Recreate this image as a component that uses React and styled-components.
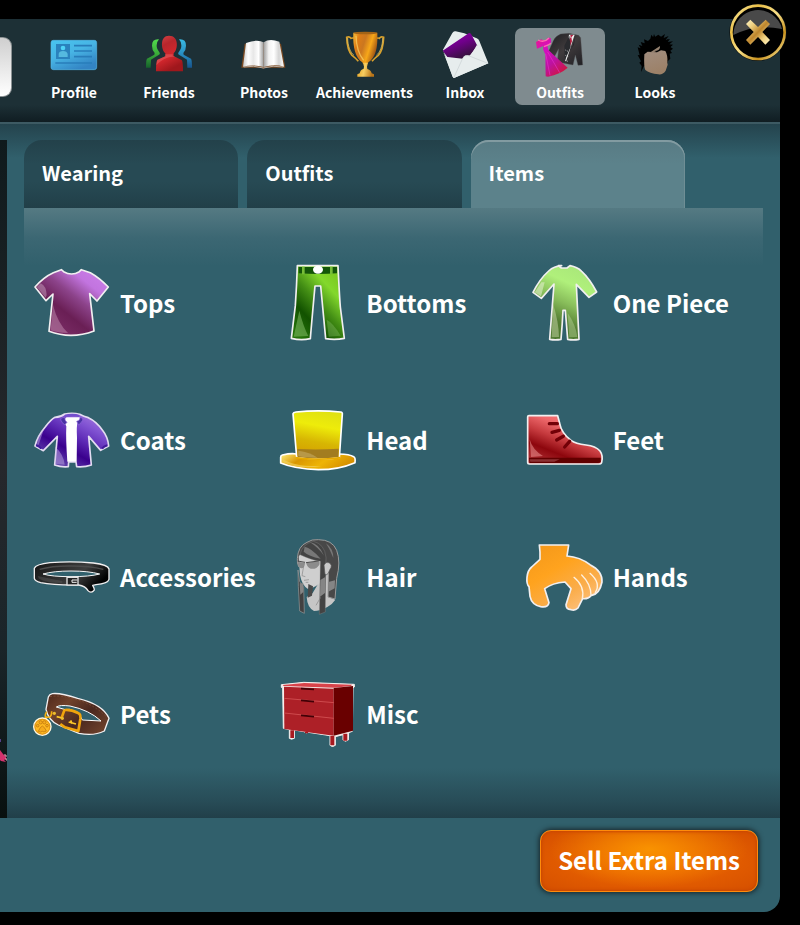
import React, { useState } from "react";
import styled, { createGlobalStyle, css } from "styled-components";

const GlobalStyle = createGlobalStyle`
  * { box-sizing: border-box; }
  body {
    margin: 0;
    background: #000;
    color: #fff;
    font-family: "Noto Sans CJK SC", "Noto Sans", sans-serif;
    font-weight: 700;
  }
  button {
    margin: 0;
    padding: 0;
    border: 0;
    background: none;
    color: inherit;
    font: inherit;
    cursor: pointer;
  }
`;

const Page = styled.div`
  min-height: 100vh;
  padding: 19px 20px 13px 0;
  display: flex;
  background: #000;
`;

const Shell = styled.main`
  position: relative;
  flex: 1;
  min-width: 0;
  display: flex;
  flex-direction: column;
  background: #31606c;
  border-radius: 0 0 16px 0;
`;

const Header = styled.header`
  height: 105px;
  display: flex;
  align-items: flex-start;
  gap: 17px;
  padding-top: 9px;
  background: linear-gradient(#1d3036 0, #1d3036 86px, #101d22 103px);
  border-bottom: 2px solid #3d5a63;
`;

const EdgeButton = styled.button`
  width: 12px;
  height: 60px;
  margin-top: 9px;
  border: 1px solid #8c9294;
  border-left: 0;
  border-radius: 0 9px 9px 0;
  background: linear-gradient(#cfcfcf, #fff);
`;

const Nav = styled.nav`
  display: flex;
  gap: 5px;
`;

const NavButton = styled.button`
  min-width: 90px;
  height: 77px;
  padding: 3px 2px 0;
  display: flex;
  flex-direction: column;
  align-items: center;
  gap: 3px;
  border-radius: 7px;
  font-size: 14px;
  line-height: 20px;
  background: ${(p) => (p.$active ? "#7f8b8f" : "transparent")};
`;

const NavIcon = styled.svg`
  width: 48px;
  height: 48px;
  flex: none;
`;

const CloseButton = styled.button`
  position: absolute;
  top: -16px;
  right: -8px;
  width: 60px;
  height: 60px;
`;

const CloseIcon = styled.svg`
  display: block;
  width: 60px;
  height: 60px;
`;

const Body = styled.div`
  flex: 1;
  display: flex;
  gap: 17px;
  padding: 16px 17px 0 0;
  background:
    linear-gradient(#24434d, rgba(49, 96, 108, 0)) top / 100% 34px no-repeat,
    linear-gradient(rgba(49, 96, 108, 0), #284d58 32px, #213f49) bottom / 100% 50px no-repeat;
`;

const Preview = styled.aside`
  width: 7px;
  display: flex;
  flex-direction: column;
  justify-content: flex-end;
  background: linear-gradient(#0f1a1c, #26282c 48%, #1a2529 75%, #08100f);
`;

const PreviewDetail = styled.svg`
  width: 7px;
  height: 80px;
`;

const Wardrobe = styled.section`
  flex: 1;
  min-width: 0;
`;

const Tabs = styled.div`
  display: grid;
  grid-template-columns: repeat(3, 29%);
  gap: 9px;
`;

const activeTab = css`
  background: linear-gradient(#587b84, #5c828b 24px);
  box-shadow: inset 0 2px 0 #829ba1, inset -1px 0 0 #6f8e95;
`;

const Tab = styled.button`
  height: 68px;
  padding: 0 18px 2px;
  text-align: left;
  font-size: 20px;
  line-height: 32px;
  border-radius: 18px 18px 0 0;
  background: linear-gradient(#23414a, #274a54 24px, #274a54 42px, #213f48);
  ${(p) => p.$active && activeTab}
`;

const Panel = styled.div`
  padding: 57px 0 66px;
  background: linear-gradient(#557a83, rgba(70, 110, 122, 0.5) 30px, rgba(49, 96, 108, 0) 58px);
`;

const Categories = styled.div`
  display: grid;
  grid-template-columns: repeat(3, minmax(0, 1fr));
  row-gap: 61px;
`;

const Category = styled.button`
  height: 76px;
  padding-left: 10px;
  display: flex;
  align-items: center;
  gap: 10px;
  font-size: 24px;
  line-height: 36px;
  text-align: left;
  white-space: nowrap;
`;

const CategoryIcon = styled.svg`
  width: 76px;
  height: 76px;
  flex: none;
  overflow: visible;
`;

const Footer = styled.footer`
  height: 94px;
  padding: 12px 22px 0 0;
  display: flex;
  justify-content: flex-end;
  align-items: flex-start;
`;

const SellButton = styled.button`
  height: 62px;
  padding: 0 17px 2px;
  border: 1px solid #ff8b0b;
  border-radius: 11px;
  font-size: 24px;
  line-height: 36px;
  background:
    radial-gradient(ellipse at 50% 30%, rgba(255, 166, 0, 0.7), rgba(255, 140, 0, 0) 65%),
    radial-gradient(ellipse at center, #f36b00, #d44f00);
  box-shadow: 0 0 5px 1px #17252a, inset 0 0 3px 1px #c94800;
`;

const Gradient = ({ id, stops, x1 = 0, y1 = 0, x2 = 0, y2 = 1 }) => (
  <linearGradient id={id} x1={x1} y1={y1} x2={x2} y2={y2}>
    {stops.map((c, i) => (
      <stop key={i} offset={i / (stops.length - 1)} stopColor={c} />
    ))}
  </linearGradient>
);

const navItems = [
  {
    name: "Profile",
    box: "150 93 144 144",
    art: (
      <>
        <Gradient id="card" x2={0.6} stops={["#48c5f0", "#47b4e4", "#3384c4"]} />
        <rect x="153" y="121" width="137" height="88" rx="7" fill="url(#card)" stroke="#55b8e8" strokeWidth="2" />
        <rect x="168" y="132" width="42" height="45" fill="#2a82bd" />
        <circle cx="189" cy="144" r="7" fill="#4fd4f7" />
        <path d="M176 171v-9q1-9 13-9t14 9v9z" fill="#55b9df" />
        <path d="M222 137h54M222 153h54M222 170h54M166 189h110" stroke="#287dba" strokeWidth="5" />
      </>
    ),
  },
  {
    name: "Friends",
    box: "432 93 144 144",
    art: (
      <>
        <Gradient id="green" stops={["#53da4d", "#3bac39", "#15612c"]} />
        <Gradient id="blue" stops={["#3abbe4", "#288fc2", "#17548d"]} />
        <Gradient id="red" x2={0.4} stops={["#d9484a", "#b9262c", "#d3272d", "#9f171c"]} />
        <path d="M474 118q-21-2-21 19 0 14 8 22l-1 5-22 12q-3 3-3 27h14l1-24 24-15q4-2 2-6-10-12-9-22 1-12 7-18z" fill="url(#green)" />
        <path d="M534 118q21-2 21 19 0 14-8 22l1 5 22 12q3 3 3 27h-14l-1-24-24-15q-4-2-2-6 10-12 9-22-1-12-7-18z" fill="url(#blue)" />
        <path d="M504 107c-28 0-24 42-11 53v9l-24 11q-4 3-4 34h81q0-31-4-34l-24-11v-9c13-11 17-53-14-53z" fill="url(#red)" />
        <path d="M466 196q10-14 33-23 22-6 36 3l-20-9v-4h-22v6l-24 10z" fill="#e35b5f" opacity=".6" />
      </>
    ),
  },
  {
    name: "Photos",
    box: "717 93 144 144",
    art: (
      <>
        <Gradient id="pageL" x2={1} y2={0} stops={["#c8c8c8", "#fff", "#e7e7e7", "#fff", "#9b9b9b"]} />
        <Gradient id="pageR" x2={1} y2={0} stops={["#9f9f9f", "#f3f3f3", "#fff", "#d4d4d4", "#fff"]} />
        <path d="M731 131l-10 72h60l6 3 7-3h59l-13-72z" fill="#7b4a22" />
        <path d="M735 129q35-13 53-2v74q-32-9-62-1z" fill="url(#pageL)" />
        <path d="M788 127q17-13 47-2l14 75q-29-9-61 1z" fill="url(#pageR)" />
        <path d="M728 201q30-6 59 3 29-9 60-3" fill="none" stroke="#ddd" strokeWidth="2" />
      </>
    ),
  },
  {
    name: "Achievements",
    box: "209 93 144 144",
    art: (
      <>
        <Gradient id="cup" x2={1} y2={0.4} stops={["#f8bd36", "#dd7c16", "#cb7720", "#f7a719", "#a45814"]} />
        <Gradient id="base" x2={1} y2={0.2} stops={["#e69c16", "#f7cd61", "#b97418"]} />
        <path d="M247 115q-5-2-8 0-5-7-13-3c1 24 4 42 16 54q10 7 19 18M316 115q5-2 8 0 5-7 13-3c-1 24-4 42-16 54q-10 7-19 18" fill="none" stroke="#d9a22d" strokeWidth="5" />
        <path d="M229 114c0 24 9 45 19 52M334 114c0 24-9 45-19 52" fill="none" stroke="#f3d36c" strokeWidth="2" />
        <path d="M246 98h72c2 48-6 75-27 89l-2 4h-14l-2-4c-20-14-29-44-27-89z" fill="url(#cup)" />
        <ellipse cx="282" cy="99" rx="36" ry="4" fill="#a36316" />
        <path d="M254 107c1 40 10 58 23 74" stroke="#ffda6b" strokeWidth="4" fill="none" opacity=".65" />
        <path d="M275 188h15l-3 12 1 7q12 4 13 13l7 3v7h-50v-7l7-3q1-10 12-14l1-6z" fill="url(#base)" />
      </>
    ),
  },
  {
    name: "Inbox",
    box: "513 93 144 144",
    art: (
      <>
        <Gradient id="letter" x2={0.5} stops={["#9500ac", "#70008b", "#35113b"]} />
        <path d="M519 149l28-50q4-7 10-5l26 6 37 15q6 2 8 8l27 67-103 44q-3-1-4-4z" fill="#e7eded" />
        <path d="M518 152l79-53q5-1 8 6l17 32-31 40-55-1z" fill="url(#letter)" />
        <path d="M520 157l7 13 50 6q5-12 17-10 6 2 9-1l18-31 34 56-103 44q-3-1-4-4z" fill="#e7eded" />
        <path d="M552 232l26-57q6-11 17-8l59 23" fill="none" stroke="#c8d0d1" strokeWidth="2" />
      </>
    ),
  },
  {
    name: "Outfits",
    box: "108 93 144 144",
    art: (
      <>
        <Gradient id="dress" x2={0.7} stops={["#e8188a", "#d40fc0", "#bd12a2", "#ce1641"]} />
        <Gradient id="jacket" x2={1} stops={["#191b1e", "#403b3d", "#202024"]} />
        <path d="M182 102l25-2 29 6 6 7 6 82-14 1-8-31-7 30-35-7-12-5 4-37-18 34-19-11 21-47q6-13 22-20z" fill="url(#jacket)" stroke="#555559" strokeWidth="1" />
        <path d="M207 104h17l-4 12-22 69-2-6z" fill="#ededed" />
        <path d="M211 105h9l-6 7 2 12-8 21-1-25 5-8z" fill="#b21d40" />
        <path d="M208 107l-15 30 2 44 17-41zm18 1l-8 29-9 16 13-18z" fill="#292a2e" />
        <path d="M196 150l10 5M196 166l11 4M195 181l9 3" stroke="#eee" strokeWidth="2" strokeDasharray="3 3" />
        <path d="M108 126l16-8q10 7 20 1l-1-6 9 1 2 12-12 11 3 12 12 12 46 42q-22 20-59 27l-7-1-1-65-7-17 1-9-19 8z" fill="url(#dress)" />
        <path d="M114 120q18 10 33-6M132 140q15-6 21-10" fill="none" stroke="#ff69b2" strokeWidth="4" />
        <path d="M137 161l13 65M143 156l36 62" stroke="#ea33cd" strokeWidth="3" opacity=".6" />
      </>
    ),
  },
  {
    name: "Looks",
    box: "390 93 144 144",
    art: (
      <>
        <Gradient id="face" x2={0.3} stops={["#a18d7f", "#9c8168"]} />
        <path d="M420 216l2-18-7-10 5-4-10-19 6 1-6-24 9 3-6-11 11 4-5-12 12 4-2-12 12 5 7-7 3-12 7 9 14-9 8 6 12-8-4 12 15-6-9 12 13-3-7 9 16-2-11 9 11 1-8 7 8 5-8 6 5 7-7 2 2 15-8 8-1 6-70 8z" fill="#000" />
        <path d="M455 116l4-14 5 12zM470 120l8-11-2 14zM487 126l16-10-7 14zM498 138l16-4-9 10z" fill="#000" />
        <path d="M430 163l10-8 28 2 12-6 13 2q8 13 6 36l1 5-6 18q-9 13-22 11-27-3-39-13-5-7-3-47z" fill="url(#face)" />
        <path d="M446 158q24 1 33-22-9 19-20 17 20 0 18-15z" fill="#94816f" />
      </>
    ),
  },
];

const outline = { stroke: "#f1eff0", strokeWidth: 5, strokeLinejoin: "round" };

const categories = [
  {
    name: "Tops",
    box: "102 105 228 228",
    art: (
      <>
        <Gradient id="tee" x1={1} y1={0.1} x2={0.3} y2={0.9} stops={["#cb7fe8", "#c274df", "#8c438a", "#6a1f55", "#782b63"]} />
        <path d="M105 171q26-30 55-43l24-9 7 6q24 14 47 0l6-6 27 9q27 15 54 43l-34 42-22-22 13 112q-68 26-135 1l12-112-21 20z" fill="url(#tee)" {...outline} />
        <path d="M110 171l12-11q17 8 18 35l-3 8z" fill="#d3afcc" opacity=".45" />
        <path d="M159 225q14 55 45 84-35-1-52-8z" fill="#d7a8c6" opacity=".4" />
      </>
    ),
  },
  {
    name: "Bottoms",
    box: "90 75 228 228",
    art: (
      <>
        <Gradient id="pants" x1={0.8} x2={0.1} y2={0.9} stops={["#79c51e", "#83d82c", "#448f15", "#125200", "#247109"]} />
        <path d="M142 77h122q4 86 7 124l12 94q-28 6-56 1l-15-158h-17q-10 108-14 158-28 6-57-1l12-98q4-60 6-120z" fill="url(#pants)" {...outline} />
        <path d="M146 81h115v19q-56 4-115 0z" fill="#145609" />
        <path d="M160 80v23M244 80v23" stroke="#77bd38" strokeWidth="8" />
        <ellipse cx="204" cy="89" rx="15" ry="12" fill="#fff" />
        <path d="M148 212q12 47 27 76l-44 2z" fill="#a8dc89" opacity=".4" />
        <path d="M230 239q20 10 42 48l-36 3z" fill="#85bd64" opacity=".4" />
      </>
    ),
  },
  {
    name: "One Piece",
    box: "78 75 228 228",
    art: (
      <>
        <Gradient id="suit" x1={0.7} x2={0.3} y2={1} stops={["#a9e77a", "#b0f07b", "#88bd5a", "#547d33", "#48762b"]} />
        <path d="M172 77l9 7h17l9-7q22 4 35 17 24 22 45 62l-23 16-38-39 8 165q-17 3-34 0-4-49-7-87h-7q-2 43-6 87-17 3-34 0l13-166-38 43-25-18q20-40 47-64 16-14 39-16z" fill="url(#suit)" {...outline} />
        <path d="M101 157l20-30 10 0-11 42z" fill="#dfeec9" opacity=".6" />
        <path d="M156 191q17 53 18 100l-22 1z" fill="#d8e3b8" opacity=".45" />
        <path d="M200 219q24 34 29 72l-24 1z" fill="#c9e0a7" opacity=".4" />
      </>
    ),
  },
  {
    name: "Coats",
    box: "102 516 228 228",
    art: (
      <>
        <Gradient id="coat" x1={0.8} x2={0.2} y2={0.8} stops={["#a57adf", "#8052d2", "#5d2ab5", "#3a008d", "#5c3aa8"]} />
        <path d="M165 562q18-1 29-10 24-5 45 1 13 7 26 10 24 11 42 37 17 21 19 48l-24 13-36-42 8 86q-20 7-44 5l-2-14h-22l-1 14q-21 2-41-5l8-86-42 43-25-14q7-29 30-56 18-24 30-30z" fill="url(#coat)" {...outline} stroke="#e3dcf1" />
        <path d="M200 562h39q3 6-6 13-4 12-2 48l-1 72h-28q-5-70-3-106-4-8-7-15 0-9 8-12z" fill="#fff" />
        <path d="M184 564q-6 6 10 21l7-8q-8-6-6-15zM246 564q8 5-10 21l-6-11q12-3 10-12z" fill="#4932a4" stroke="#8f6bd9" strokeWidth="2" />
        <path d="M116 644l17-50q-26 24-21 50zM166 650q26 25 28 54l-28-2z" fill="#cab8e8" opacity=".45" />
        <path d="M195 558q22-7 43 0" stroke="#7350cd" strokeWidth="7" fill="none" />
        <path d="M108 646q11 3 16 10M322 646q-11 3-16 10" stroke="#411b9a" strokeWidth="6" fill="none" />
      </>
    ),
  },
  {
    name: "Head",
    box: "90 486 228 228",
    art: (
      <>
        <Gradient id="hat" x1={0.7} x2={0.5} y2={1} stops={["#dfe012", "#eeec0a", "#d7b603", "#d59d00"]} />
        <Gradient id="brim" x2={1} y2={0.3} stops={["#fff080", "#d99600", "#eeb405", "#d79200"]} />
        <path d="M92 652q0-6 5-7 27-6 42-3h128q32 1 44 8 6 2 4 18-48 21-110 21-70-2-113-20z" fill="url(#brim)" {...outline} stroke="#fff" />
        <path d="M129 521q1-4 9-5 66-7 134 0 6 1 5 6l-9 131q-65 8-128-2z" fill="url(#hat)" {...outline} stroke="#fff" />
        <path d="M142 627q65 3 124-1l-1 25q-62 8-122 0z" fill="#a27c20" />
        <path d="M145 632q35 4 58 21-34 1-58-4z" fill="#c0a45a" opacity=".7" />
        <path d="M137 650q66 10 134 0v6q-66 8-134 0z" fill="#e5a900" />
        <path d="M98 656q34 25 118 22-72 12-118-12z" fill="#f3d25f" opacity=".65" />
      </>
    ),
  },
  {
    name: "Feet",
    box: "78 486 228 228",
    art: (
      <>
        <Gradient id="boot" x1={0.8} y1={0.1} x2={0.25} y2={1} stops={["#fa7478", "#ee686b", "#c5393d", "#8d060d", "#ac2c30"]} />
        <path d="M80 530q0-3 4-3h86l6 23q5 29 35 52 12 9 44 13 29 3 42 18 10 14 5 34-1 5-9 5H85q-5 0-5-5z" fill="url(#boot)" {...outline} />
        <path d="M84 653h215v11q-1 5-8 5H86z" fill="#620000" />
        <path d="M86 658h90l-16 7H88z" fill="#a65356" opacity=".6" />
        <path d="M145 551h24M153 577l22-6M167 600l20-11M191 621l15-17" stroke="#720007" strokeWidth="10" strokeLinecap="round" />
        <path d="M86 598q8 31 40 50l-36 3z" fill="#f49d9c" opacity=".5" />
      </>
    ),
  },
  {
    name: "Accessories",
    box: "102 57 228 228",
    art: (
      <>
        <Gradient id="belt" x2={1} y2={0.4} stops={["#151515", "#2a2a2a", "#3d3d3d", "#000"]} />
        <path d="M103 145q4-12 47-17 65-5 130 1 44 5 47 18v31q-3 12-39 16l-10 2q8 14 3 16-9 9-17 0-8-14-28-17-76 1-114-7-19-5-19-13z" fill="url(#belt)" {...outline} strokeWidth="4" />
        <path d="M129 162q32-9 84-9t86 9q-30 8-86 8-58 0-84-8z" fill="#31606c" stroke="#f4f4f4" strokeWidth="3" />
        <path d="M119 148q40-11 96-10 54 0 95 10" stroke="#4c4c4c" strokeWidth="4" fill="none" />
        <rect x="201" y="172" width="33" height="23" fill="#222" stroke="#e3e3e3" strokeWidth="4" />
        <path d="M232 180h-16v7h14" fill="none" stroke="#f0f0f0" strokeWidth="3" />
        <path d="M113 168q36 8 74 15v6q-45 0-70-13z" fill="#555" opacity=".5" />
      </>
    ),
  },
  {
    name: "Hair",
    box: "60 57 228 228",
    art: (
      <>
        <path d="M178 185l30-30-2 76 20 8q-8 13-24 22-22 12-40 12-20-10-22-42l18-12z" fill="#c6c6c6" />
        <path d="M112 116q2-38 29-49 14-10 34-8 42 0 55 32 13 34 0 84l-5 62-21-6 1-71-13-46-72-10-4 36q-5-10-4-24z" fill="#484848" stroke="#9a9a9a" strokeWidth="3" />
        <path d="M116 110q8-12 20-11l50 26-2 60q-14 16-40 22-18-10-24-42z" fill="#cfcfcf" />
        <path d="M114 150l5 35 12 17 2 78-14-7-4-74z" fill="#414141" stroke="#999" strokeWidth="2" />
        <path d="M145 192l14 7-3 28-13 6z" fill="#4a4a4a" />
        <path d="M113 125l22 4q-1 16-11 16-9-3-11-20zM139 129l37-6q5 4 2 11-9 15-26 12-11-4-13-17z" fill="#8c8c8c" />
        <path d="M113 123l22 4M138 128l38-5" stroke="#4d4d4d" strokeWidth="3" />
        <path d="M120 104q6-31 40-40 34 8 38 48l-2 164-18 7 3-159q-22-2-61-20z" fill="#434343" stroke="#8e8e8e" strokeWidth="1" />
        <path d="M134 80q20 4 48 36-36-7-51-21zM150 67q26 3 42 40-18-25-42-40zM198 70q22 16 22 44-10-25-22-44z" fill="#777" />
        <path d="M192 135q6-11 15-7 12 7 3 20l-6 13q-4 5-9 2z" fill="#c9c9c9" stroke="#555" strokeWidth="2" />
        <path d="M119 190h11v26l-9 8zM181 180l15-9v47l-16 12zM205 186l20-5-1 24-19 10z" fill="#858585" />
        <path d="M131 138l-5 29 10 3M132 181l15-2M137 187h8M182 232l-14 24" stroke="#858585" strokeWidth="2" fill="none" />
      </>
    ),
  },
  {
    name: "Hands",
    box: "78 57 228 228",
    art: (
      <>
        <Gradient id="hand" x1={0.2} x2={0.9} stops={["#f5991a", "#ffa31e", "#faad4b", "#ffc68a"]} />
        <path d="M115 75h88l-5 33q39 3 69 26 38 19 36 52-7 37-33 41-9 11-25 9l-14 28q-9 9-21 5-15-1-15-15l15-48-18-20q-38 3-61 20l13 42q-3 16-25 12-27-6-32-31l-3-29q-8-8-6-28 2-21 14-31l25-23q1-22-2-43z" fill="url(#hand)" {...outline} />
        <path d="M219 172q33 27 25 64M242 165q28 27 28 61M267 160q34 30 16 57" fill="none" stroke="#fff0dd" strokeWidth="4" strokeLinecap="round" />
      </>
    ),
  },
  {
    name: "Pets",
    box: "102 468 228 228",
    art: (
      <>
        <Gradient id="collar" x2={1} y2={0.7} stops={["#4b251a", "#70422b", "#4a281f", "#6a3e2a"]} />
        <path d="M138 568l7-37q3-8 12-10 24-3 76 14 76 18 94 60l-14 38q-32 16-76 7l-62-25q-30-14-37-47z" fill="url(#collar)" {...outline} strokeWidth="4" />
        <path d="M169 561q10-7 41-3 58 12 93 45l-56-3-12-22-27-10-12 1z" fill="#31606c" stroke="#fff" strokeWidth="3" />
        <path d="M150 530q37-6 80 9 51 14 88 50" stroke="#86533a" strokeWidth="2" strokeDasharray="6 5" fill="none" />
        <path d="M195 570q17-2 39 9 9 3 7 18l-6 36-40-11-14-10M194 568l-9 25" fill="none" stroke="#f0a40c" strokeWidth="8" strokeLinejoin="round" />
        <path d="M170 590l17 4M206 606l22 6M212 601l4 10" stroke="#ffca28" strokeWidth="5" />
        <circle cx="163" cy="580" r="5" fill="#eebc2c" />
        <circle cx="187" cy="595" r="5" fill="#eebc2c" />
        <path d="M141 599q-10-9-1-24M137 590q19 7 18-16" stroke="#f4af10" strokeWidth="5" fill="none" />
        <circle cx="127" cy="620" r="26" fill="#eca31a" stroke="#fff6df" strokeWidth="4" />
        <circle cx="127" cy="620" r="22" fill="#ffb921" stroke="#d98d14" strokeWidth="2" />
        <path d="M127 618q7 3 12 15-8 5-12 1-4 4-12 0 5-13 12-16z" fill="#f6ab1c" stroke="#b8710d" strokeWidth="2" />
        <g fill="#f6ab1c" stroke="#b8710d" strokeWidth="2">
          <circle cx="113" cy="617" r="4" />
          <circle cx="122" cy="607" r="5" />
          <circle cx="133" cy="607" r="5" />
          <circle cx="141" cy="617" r="4" />
        </g>
      </>
    ),
  },
  {
    name: "Misc",
    box: "60 468 228 228",
    art: (
      <>
        <path d="M64 494l67-7 152 6v8l-4 2-2 131-11 4-1 22q-9 7-16 0v-16l-23 6v26q-9 7-16 0v-29l-65-10q-4 4-13-2l-29-5v25q-9 5-15 0v-26l-18-4-2-121-4-2z" fill="#f6efed" stroke="#f6efed" strokeWidth="3" strokeLinejoin="round" />
        <path d="M68 495l65-6 143 5-3 4-51 5-151-5z" fill="#d8434a" />
        <path d="M72 500l149 6v141l-148-20z" fill="#ad2027" />
        <path d="M221 504l58-6v134l-58 15z" fill="#690000" />
        <path d="M73 535l149 13M73 579l149 16" stroke="#ce4a4d" strokeWidth="3" />
        <path d="M123 506l39 2M123 541l39 4M123 586l39 4" stroke="#420006" strokeWidth="5" />
        <path d="M91 631h11v23H91zM211 648h12v28h-12zM250 641h12v21h-12zM135 636h9v4h-9z" fill="#a8191f" />
      </>
    ),
  },
];

export default function App() {
  const [section, setSection] = useState("Outfits");
  const [tab, setTab] = useState("Items");

  return (
    <>
      <GlobalStyle />
      <Page>
        <Shell>
          <Header>
            <EdgeButton aria-label="Menu" />
            <Nav>
              {navItems.map(({ name, box, art }) => (
                <NavButton key={name} $active={section === name} onClick={() => setSection(name)}>
                  <NavIcon viewBox={box} aria-hidden="true">{art}</NavIcon>
                  {name}
                </NavButton>
              ))}
            </Nav>
          </Header>
          <Body>
            <Preview>
              <PreviewDetail viewBox="0 0 7 80" aria-hidden="true">
                <path d="M0 1h1v3H0z" fill="#57408a" />
                <path d="M0 12l3 4 3 3v2L4 22l2 2-5-1-1-1z" fill="#d3326d" />
                <path d="M4 17h2v2M5 21h2v2" stroke="#f1a5bd" fill="none" />
              </PreviewDetail>
            </Preview>
            <Wardrobe>
              <Tabs role="tablist">
                {["Wearing", "Outfits", "Items"].map((name) => (
                  <Tab
                    key={name}
                    role="tab"
                    aria-selected={tab === name}
                    $active={tab === name}
                    onClick={() => setTab(name)}
                  >
                    {name}
                  </Tab>
                ))}
              </Tabs>
              <Panel role="tabpanel">
                <Categories>
                  {categories.map(({ name, box, art }) => (
                    <Category key={name}>
                      <CategoryIcon viewBox={box} aria-hidden="true">{art}</CategoryIcon>
                      {name}
                    </Category>
                  ))}
                </Categories>
              </Panel>
            </Wardrobe>
          </Body>
          <Footer>
            <SellButton>Sell Extra Items</SellButton>
          </Footer>
          <CloseButton aria-label="Close">
            <CloseIcon viewBox="0 0 180 180" aria-hidden="true">
              <Gradient id="ring" x2={1} y2={1} stops={["#fff5b4", "#e9bd45", "#f8e08a", "#c8921f", "#fff1ad"]} />
              <Gradient id="cross" x2={1} y2={1} stops={["#fff5ca", "#efcf7d", "#bd852c", "#f2d484", "#fff4c5"]} />
              <circle cx="90" cy="88" r="86" fill="#0c1011" />
              <circle cx="90" cy="88" r="80" fill="#000" stroke="url(#ring)" strokeWidth="8" />
              <path d="M16 96a74 74 0 0 1 146-18Q84 61 16 96z" fill="#494949" />
              <path d="M54 63l13-13 23 22 23-22 13 13-23 24 23 24-14 14-22-23-23 23-13-14 23-24z" fill="url(#cross)" />
            </CloseIcon>
          </CloseButton>
        </Shell>
      </Page>
    </>
  );
}
